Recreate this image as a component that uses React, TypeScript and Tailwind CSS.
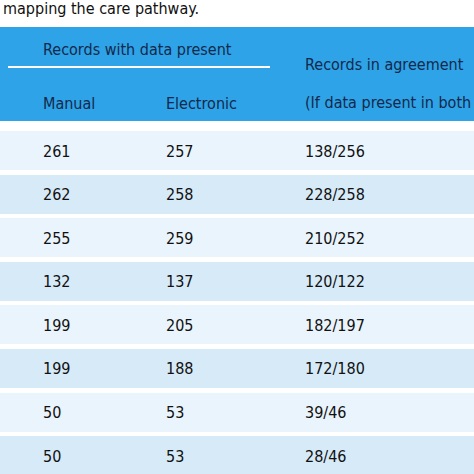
const rows = [
  ["261", "257", "138/256"],
  ["262", "258", "228/258"],
  ["255", "259", "210/252"],
  ["132", "137", "120/122"],
  ["199", "205", "182/197"],
  ["199", "188", "172/180"],
  ["50", "53", "39/46"],
  ["50", "53", "28/46"],
];

export default function App() {
  return (
    <div className="w-[474px] h-[474px] overflow-hidden bg-white whitespace-nowrap font-['DejaVu_Sans_Condensed','Open_Sans',sans-serif]">
      {/* caption */}
      <div className="h-[27px] pl-[3px] text-[16px] leading-[18px] text-[#111]">
        mapping the care pathway.
      </div>

      {/* header */}
      <div className="h-[94px] bg-[#2ea3e8] flex text-[16px] text-[#13294b]">
        <div className="w-[280px] flex flex-col">
          <div className="h-[39px] pt-[6px] pl-[43px] flex items-center">Records with data present</div>
          <div className="ml-[8px] w-[262px] h-[2px] bg-white" />
          <div className="h-[53px] pt-[19px] flex items-center">
            <span className="w-[166px] pl-[43px]">Manual</span>
            <span>Electronic</span>
          </div>
        </div>
        <div className="flex flex-col pl-[25px]">
          <div className="pt-[28px] leading-[20px]">Records in agreement</div>
          <div className="mt-[18px] leading-[20px]">(If data present in both</div>
        </div>
      </div>

      {/* rows */}
      <div className="mt-[10px] flex flex-col gap-[4.6px] text-[16px] text-[#111]">
        {rows.map((r, i) => (
          <div
            key={i}
            className={`h-[39px] pt-[2px] flex items-center ${i % 2 === 0 ? "bg-[#eaf4fc]" : "bg-[#d6eaf8]"}`}
          >
            <span className="w-[166px] pl-[43px]">{r[0]}</span>
            <span className="w-[139px]">{r[1]}</span>
            <span>{r[2]}</span>
          </div>
        ))}
      </div>
    </div>
  );
}
